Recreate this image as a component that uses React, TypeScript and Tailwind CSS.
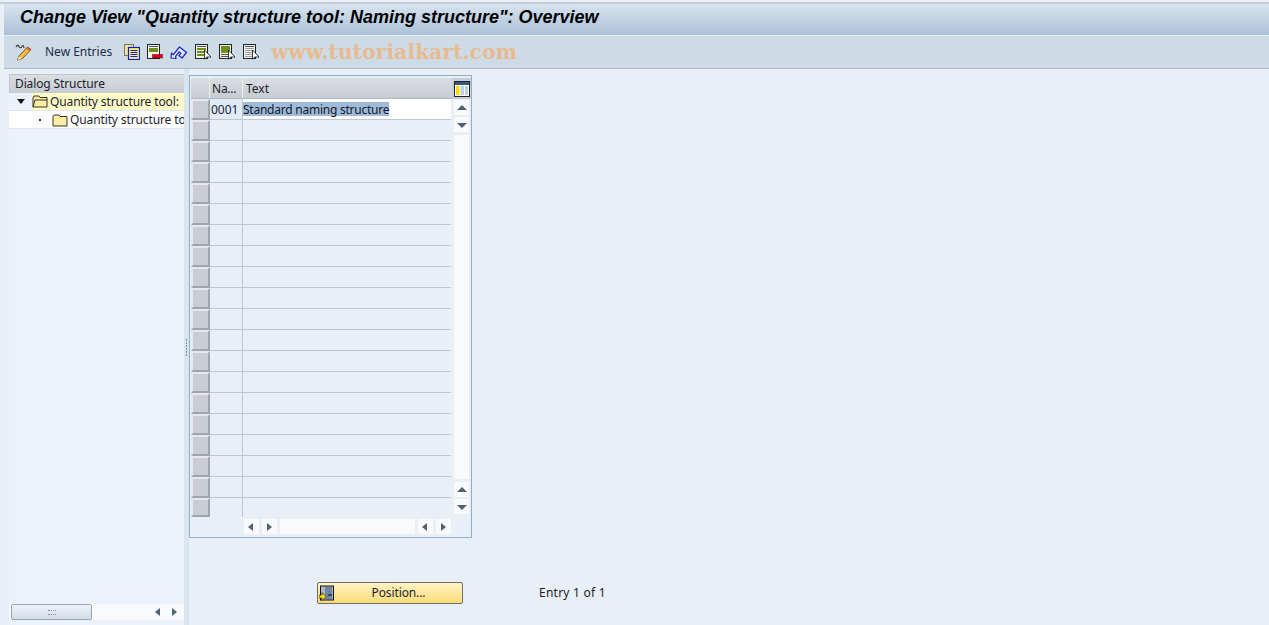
import React from "react";

const F = "[font-family:'Noto_Sans','Open_Sans',sans-serif]";

function Tri({ dir, className = "fill-[#4f6275]" }: { dir: "l" | "r" | "u" | "d"; className?: string }) {
  const p = { l: "6,1 6,9 1,5", r: "2,1 2,9 7,5", u: "0,7 10,7 5,2", d: "0,3 10,3 5,8" }[dir];
  return (
    <svg width="10" height="10" viewBox="0 0 10 10" className={className}>
      <polygon points={p} />
    </svg>
  );
}

function SBtn({ dir, className = "" }: { dir: "l" | "r" | "u" | "d"; className?: string }) {
  return (
    <div className={`flex items-center justify-center bg-[#f9fafc] ${className}`}>
      <Tri dir={dir} />
    </div>
  );
}

function Pencil() {
  return (
    <svg width="18" height="18" viewBox="0 0 18 18" fill="none">
      <path d="M1 4 Q2.5 1 4 3.5 T7 3.5 T9 5" stroke="#333" strokeWidth="1.1" />
      <path d="M4 13 L12.5 4 L16 6.5 L7.5 15.5 L2.5 17 Z" fill="#f8b93e" stroke="#6b4a1a" strokeWidth="0.9" />
      <path d="M12.5 4 L16 6.5 L14.6 8 L11.2 5.4 Z" fill="#e0563a" />
      <path d="M2.5 17 L4 13.5 L6.5 15.8 Z" fill="#fff0c8" />
    </svg>
  );
}

function Copy() {
  return (
    <svg width="16" height="16" viewBox="0 0 16 16">
      <rect x="0.5" y="0.5" width="9" height="11" fill="#ede3a6" stroke="#77775f" />
      <rect x="4.5" y="3.5" width="11" height="12" fill="#fff36b" stroke="#0f1ad6" strokeWidth="1.2" />
      <path d="M6.5 6.5h7M6.5 8.5h7M6.5 10.5h7M6.5 12.5h7" stroke="#0f1ad6" />
    </svg>
  );
}

function DocGreen({ arrow, red, dark, grey }: { arrow?: boolean; red?: boolean; dark?: boolean; grey?: boolean }) {
  const c = grey ? "#9aa0a0" : "#6f8f1c";
  return (
    <svg width="18" height="16" viewBox="0 0 18 16">
      <rect x="1.5" y="0.5" width="12" height="14" fill="#f4f4ee" stroke="#222" />
      <path d="M3 2.5h9" stroke="#555" />
      {grey ? (
        <path d="M3 4.5h9M3 6.5h9M3 8.5h9M3 10.5h9M3 12.5h9" stroke={c} />
      ) : dark ? (
        <>
          <rect x="3" y="2" width="9" height="7" fill={c} />
          <path d="M3 10.5h9M3 12.5h9" stroke="#555" />
        </>
      ) : red ? (
        <rect x="3" y="4" width="9" height="4" fill={c} />
      ) : (
        <>
          <rect x="3" y="4" width="9" height="2" fill={c} />
          <rect x="3" y="7" width="9" height="2" fill={c} />
          <rect x="3" y="10" width="9" height="2" fill={c} />
        </>
      )}
      {arrow && <path d="M10.5 6 L10.5 15 L12.7 13 L17 13 Z" fill="#fff" stroke="#111" strokeWidth="0.8" />}
      {red && <rect x="6.5" y="10.5" width="10" height="3.5" fill="#e0001b" stroke="#7a0010" strokeWidth="0.5" />}
    </svg>
  );
}

function Undo() {
  return (
    <svg width="18" height="15" viewBox="0 0 18 15" fill="none">
      <path d="M6 13.5 L1 13 L1.5 8 L3.4 9.6 L9.5 2 L16.5 7.5 L12 13 L9 10.5 L10.8 8.3 L9 6.8 L5.6 11.3 Z" stroke="#1420cc" strokeWidth="1.2" fill="#e3ecf6" strokeLinejoin="round" />
    </svg>
  );
}

function Folder({ open }: { open?: boolean }) {
  return (
    <svg width="16" height="13" viewBox="0 0 16 13">
      <path d="M1 2.5 L2 1 H7 L8 2.5 H15 V12 H1 Z" fill="#fdeca6" stroke="#34342a" />
      {open && <path d="M1 12 L3 5 H15" fill="none" stroke="#34342a" />}
    </svg>
  );
}

function Row({ first, last }: { first?: boolean; last?: boolean }) {
  return (
    <div className={`flex shrink-0 ${last ? "h-[19px]" : "h-[21px]"}`}>
      <div className="w-[19px] shrink-0 border-2 border-[#aeb4bb] border-t-[#e6e8ea] border-l-[#e6e8ea] border-r-[#9ea5ad] border-b-[#9ea5ad] bg-[#c9ced4]" />
      <div
        className={`w-[33px] shrink-0 ${last ? "" : "border-b-[1px]"} border-r-[1px] border-[#bcc7d3] text-[12px] leading-[21px] pl-[1px] text-[#1d1d35] ${first ? "bg-[#e0ebf5]" : ""}`}
      >
        {first && "0001"}
      </div>
      <div className={`flex items-start w-[208px] shrink-0 ${last ? "" : "border-b-[1px]"} border-[#bcc7d3] ${first ? "bg-white" : ""}`}>
        {first && (
          <span className="bg-[#a0bbd7] text-[12px] h-[14px] leading-[16px] mt-[3px] text-[#10182c] tracking-[-0.02em]">
            Standard naming structure
          </span>
        )}
      </div>
    </div>
  );
}

export default function App() {
  return (
    <div className={`${F} w-[1269px] h-[625px] overflow-hidden flex flex-col bg-[#e8eff7] text-[#1d1d2d]`}>
      <div className="h-[4px] shrink-0 border-b-2 border-[#c7ced7]" />
      <div className="h-[32px] shrink-0 ml-[4px] flex items-start pl-[16px] bg-gradient-to-b from-[#d7e4f0] to-[#abc1d8] border-b border-[#e6edf4]">
        <span className="[font-family:'Liberation_Sans',sans-serif] text-[18px] leading-[26px] font-bold italic text-black whitespace-nowrap">
          Change View "Quantity structure tool: Naming structure": Overview
        </span>
      </div>
      <div className="h-[33px] shrink-0 ml-[4px] flex items-center pl-[11px] bg-[#cddbe7] border-b border-[#aab8c8]">
        <Pencil />
        <span className="ml-[12px] text-[12px] text-[#1d2a4a]">New Entries</span>
        <div className="ml-[12px] flex items-center gap-[6px]">
          <Copy />
          <DocGreen red />
          <Undo />
          <DocGreen arrow />
          <DocGreen arrow dark />
          <DocGreen arrow grey />
        </div>
        <span className="ml-[11px] [font-family:'DejaVu_Serif',serif] font-bold text-[20px] text-[#e8ba8e] whitespace-nowrap tracking-[0.01em]">
          www.tutorialkart.com
        </span>
      </div>
      <div className="flex flex-1 min-h-0">
        <div className="w-[9px] shrink-0" />
        <div className="w-[175px] shrink-0 flex flex-col mt-[5px] bg-[#ebf2fb]">
          <div className="h-[19px] shrink-0 flex items-center pl-[5px] text-[12px] tracking-[-0.01em] bg-gradient-to-b from-[#dadee2] to-[#c7ccd2] border-t border-l border-[#b9c6d3]">
            Dialog Structure
          </div>
          <div className="h-[18px] shrink-0 flex items-center border-b border-[#dfe5ec] overflow-hidden whitespace-nowrap text-[12px] tracking-[-0.01em]">
            <svg width="8" height="6" viewBox="0 0 8 6" className="ml-[8px] fill-[#111] shrink-0">
              <polygon points="0,0 8,0 4,5" />
            </svg>
            <div className="ml-[7px] flex items-center flex-1 h-full bg-[#fdfbc8]">
              <Folder open />
              <span className="ml-[2px]">Quantity structure tool:</span>
            </div>
          </div>
          <div className="h-[18px] shrink-0 flex items-center pt-[1px] border-b border-[#dfe5ec] bg-white overflow-hidden whitespace-nowrap text-[12px] tracking-[-0.01em]">
            <div className="ml-[30px] w-[2px] h-[2px] bg-[#333] shrink-0" />
            <div className="ml-[11px] shrink-0"><Folder /></div>
            <span className="ml-[2px]">Quantity structure tool</span>
          </div>
          <div className="flex-1" />
          <div className="h-[16px] shrink-0 mb-[5px] flex bg-[#f9fafc]">
            <div className="ml-[2px] w-[81px] border border-[#98a5b3] rounded-[2px] bg-gradient-to-b from-[#eef3f8] to-[#d2dce6] flex items-center justify-center">
              <div className="w-[8px] h-[5px] border-y border-dotted border-[#8a97a5]" />
            </div>
            <div className="flex-1" />
            <SBtn dir="l" className="w-[15px] bg-[#eef2f7]" />
            <div className="w-[1px]" />
            <SBtn dir="r" className="w-[15px] bg-[#eef2f7]" />
            <div className="w-[2px]" />
          </div>
        </div>
        <div className="w-[5px] shrink-0 bg-[#dbe5ef] flex flex-col items-center justify-center gap-[1px]">
          {[0, 1, 2, 3, 4, 5].map((i) => (
            <div key={i} className="w-[1px] h-[2px] bg-[#7f8c99]" />
          ))}
        </div>
        <div className="flex-1 flex flex-col pt-[6px]">
          <div className="w-[283px] h-[463px] border border-[#90aec8] flex flex-col pl-[1px] pt-[2px] shrink-0">
            <div className="flex">
              <div className="w-[261px]">
                <div className="flex h-[21px] text-[12px] bg-gradient-to-b from-[#dadee2] to-[#c7ccd2] border-b border-[#aeb8c3]">
                  <div className="w-[19px] border-r border-[#eceef0]" />
                  <div className="w-[33px] border-r border-[#eceef0] pl-[2px] leading-[22px] tracking-[-0.02em]">Na...</div>
                  <div className="pl-[3px] leading-[22px]">Text</div>
                </div>
                {Array.from({ length: 20 }).map((_, i) => (
                  <Row key={i} first={i === 0} last={i === 19} />
                ))}
              </div>
              <div className="w-[19px] flex flex-col">
                <div className="h-[21px] flex items-center justify-center bg-[#c9ced4]">
                  <svg width="16" height="16" viewBox="0 0 16 16">
                    <rect x="0.5" y="0.5" width="15" height="15" fill="#fff" stroke="#223" />
                    <rect x="1" y="1" width="14" height="3" fill="#3a5a78" />
                    <rect x="2" y="5" width="3.5" height="9" fill="#ffd900" />
                    <rect x="6.5" y="5" width="3.5" height="9" fill="#b9d2e6" />
                    <rect x="11" y="5" width="3" height="9" fill="#b9d2e6" />
                  </svg>
                </div>
                <div className="ml-[2px] w-[15px] flex-1 flex flex-col pb-[3px]">
                  <SBtn dir="u" className="h-[15px] mt-[1px]" />
                  <SBtn dir="d" className="h-[15px] mt-[2px]" />
                  <div className="flex-1 bg-[#f9fafc] mt-[3px]" />
                  <SBtn dir="u" className="h-[15px] mt-[3px]" />
                  <SBtn dir="d" className="h-[15px] mt-[2px]" />
                </div>
              </div>
            </div>
            <div className="flex h-[15px] mt-[2px] ml-[53px] gap-[3px]">
              <SBtn dir="l" className="w-[15px]" />
              <SBtn dir="r" className="w-[15px]" />
              <div className="w-[135px] bg-[#f9fafc]" />
              <SBtn dir="l" className="w-[15px]" />
              <SBtn dir="r" className="w-[15px]" />
            </div>
          </div>
          <div className="flex items-center mt-[44px] ml-[128px]">
            <div className="w-[146px] h-[22px] rounded-[2px] border border-[#6d6d6d] bg-gradient-to-b from-[#fff4c4] to-[#fbdc76] flex items-center">
              <svg width="16" height="16" viewBox="0 0 16 16" className="ml-[1px] shrink-0">
                <rect x="1.5" y="1" width="13" height="14" fill="#a9b8c8" stroke="#111" />
                <rect x="6" y="2" width="7" height="12" fill="#6d85a0" />
                <path d="M9 10h4" stroke="#111" />
                <path d="M0 10h3V7.5L7 11.5 3 15.5V13H0Z" fill="#ffd900" stroke="#222" strokeWidth="0.6" />
              </svg>
              <span className="flex-1 text-center text-[12px] tracking-[-0.01em]">Position...</span>
            </div>
            <span className="ml-[76px] text-[12px] tracking-[0.02em]">Entry 1 of 1</span>
          </div>
        </div>
      </div>
    </div>
  );
}
